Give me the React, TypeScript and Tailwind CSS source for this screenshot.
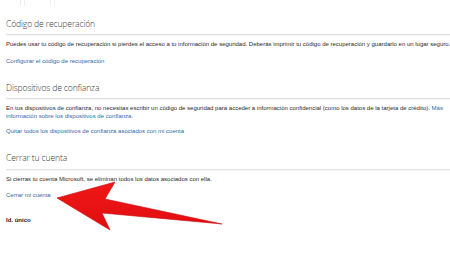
import React from "react";

const body = "text-[6px] leading-[8px] text-[#2a2a2a] whitespace-nowrap";
const link = "text-[6px] leading-[8px] text-[#2f6aa8] whitespace-nowrap";
const heading =
  "text-[8.6px] leading-[12px] font-light tracking-[-0.15px] text-[#3a3a3a] whitespace-nowrap";

function Divider({ mt }: { mt: string }) {
  return (
    <div className={mt}>
      <div className="h-px bg-[#e2e2e2]" />
      <div className="h-px bg-[#f6f6f6]" />
    </div>
  );
}

export default function App() {
  return (
    <div
      className="relative w-[450px] h-[253px] overflow-hidden bg-white"
      style={{ fontFamily: '"Liberation Sans", Arial, sans-serif' }}
    >
      <div className="flex flex-col pl-[6px]">
        <div className="h-[18px] flex items-start gap-[3px] pl-[14px]">
          <div className="w-px h-[6px] bg-[#efefef]" />
          <div className="w-px h-[6px] bg-[#efefef]" />
          <div className="w-px h-[5px] bg-[#f2f2f2] ml-[22px]" />
          <div className="w-px h-[5px] bg-[#f2f2f2]" />
        </div>
        <div className={heading} style={{ fontFamily: '"Open Sans", sans-serif' }}>
          Código de recuperación
        </div>
        <Divider mt="mt-[4px]" />
        <div className={`${body} mt-[4px]`}>
          Puedes usar tu código de recuperación si pierdes el acceso a tu información de seguridad. Deberás imprimir tu código de recuperación y guardarlo en un lugar seguro.
        </div>
        <div className={`${link} mt-[9px]`}>Configurar el código de recuperación</div>

        <div className={`${heading} mt-[17px]`} style={{ fontFamily: '"Open Sans", sans-serif' }}>
          Dispositivos de confianza
        </div>
        <Divider mt="mt-[4px]" />
        <div className={`${body} mt-[4px]`}>
          En tus dispositivos de confianza, no necesitas escribir un código de seguridad para acceder a información confidencial (como los datos de la tarjeta de crédito).{" "}
          <span className="text-[#2f6aa8]">Más</span>
          <br />
          <span className="text-[#2f6aa8]">información sobre los dispositivos de confianza.</span>
        </div>
        <div className={`${link} mt-[7px]`}>Quitar todos los dispositivos de confianza asociados con mi cuenta</div>

        <div className={`${heading} mt-[17px]`} style={{ fontFamily: '"Open Sans", sans-serif' }}>
          Cerrar tu cuenta
        </div>
        <Divider mt="mt-[5px]" />
        <div className={`${body} mt-[4px]`}>
          Si cierras tu cuenta Microsoft, se eliminan todos los datos asociados con ella.
        </div>
        <div className={`${link} mt-[8px]`}>Cerrar mi cuenta</div>
        <div className="mt-[17px] text-[6px] leading-[8px] font-bold text-[#1a1a1a] whitespace-nowrap">
          Id. único
        </div>
      </div>

      <svg
        className="absolute left-0 top-0"
        width="450"
        height="253"
        viewBox="0 0 450 253"
      >
        <defs>
          <linearGradient id="ag" x1="0" y1="0" x2="0" y2="1">
            <stop offset="0" stopColor="#f01818" />
            <stop offset="1" stopColor="#e00d10" />
          </linearGradient>
        </defs>
        <polygon
          points="57,198 115,182 105,199 222,224 102,213 110,230"
          fill="url(#ag)"
          stroke="#c80a0d"
          strokeWidth="0.6"
          strokeLinejoin="round"
        />
      </svg>
    </div>
  );
}
